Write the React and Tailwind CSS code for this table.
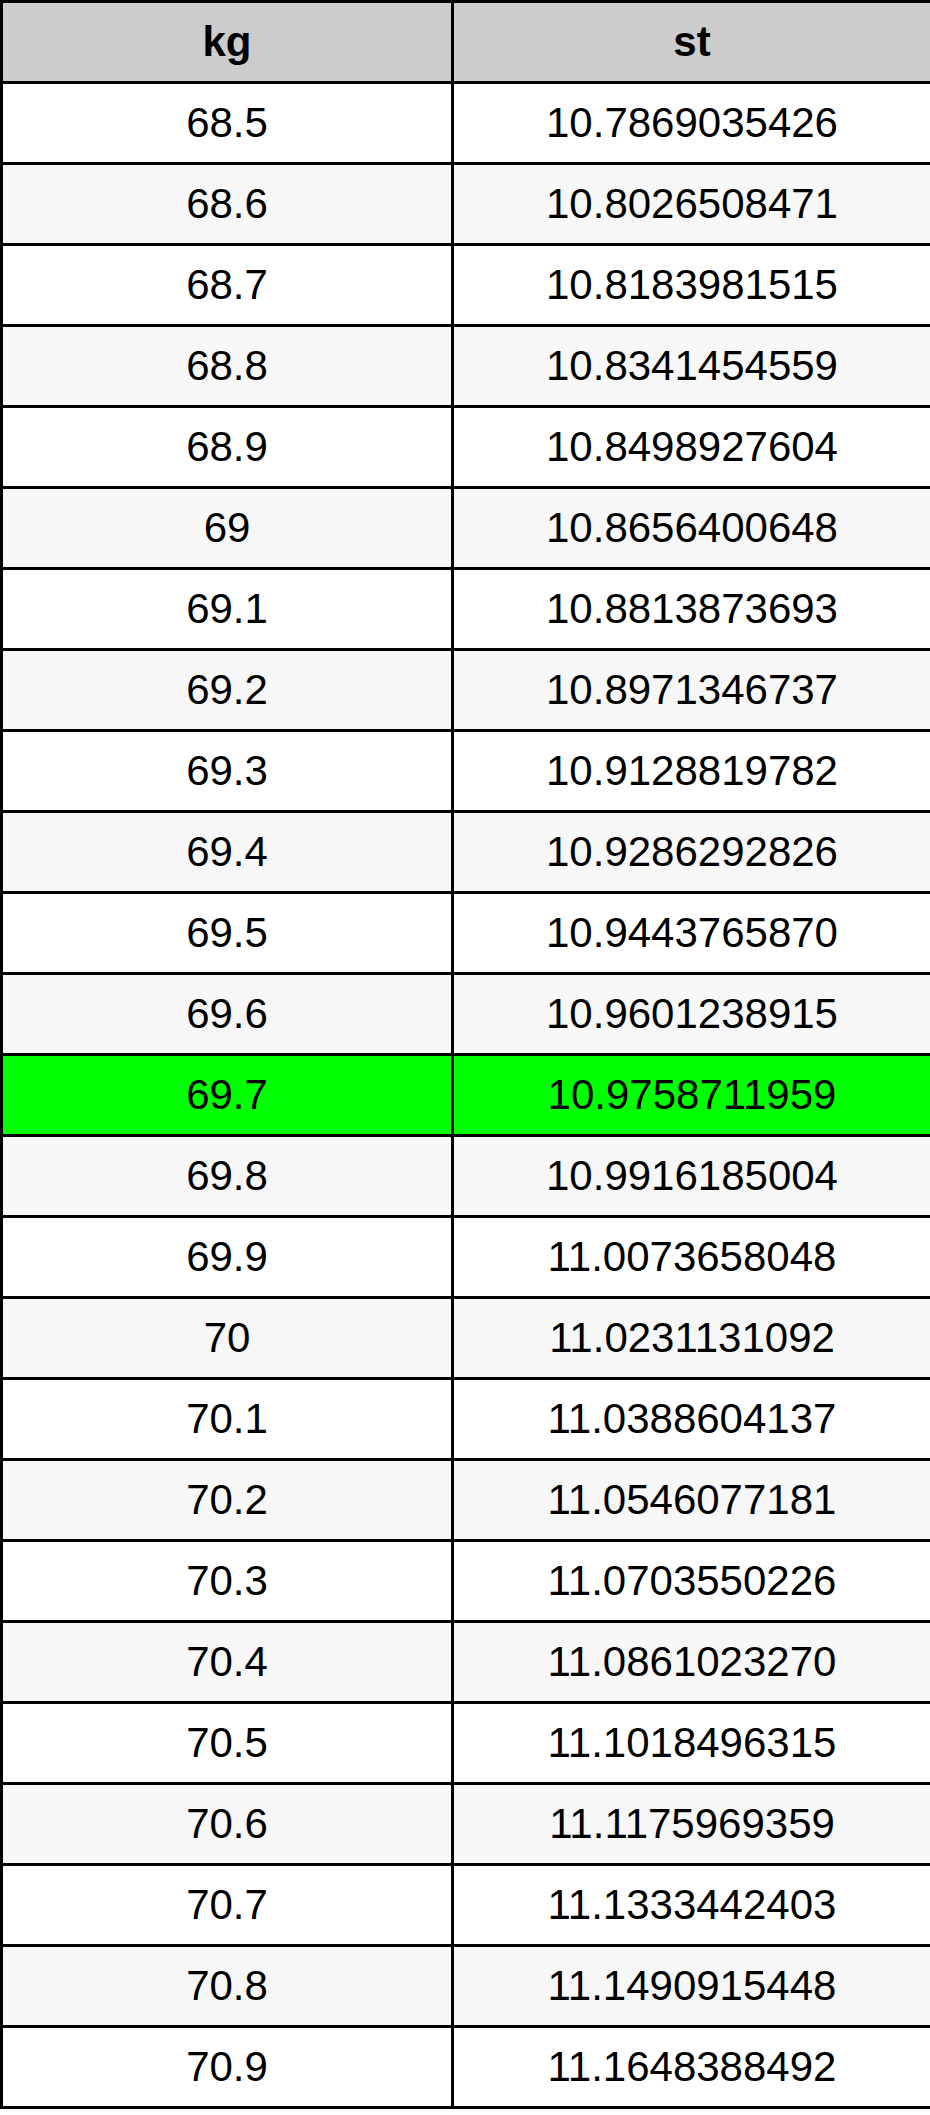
import React from "react";

const rows = [
  ["68.5", "10.7869035426"],
  ["68.6", "10.8026508471"],
  ["68.7", "10.8183981515"],
  ["68.8", "10.8341454559"],
  ["68.9", "10.8498927604"],
  ["69", "10.8656400648"],
  ["69.1", "10.8813873693"],
  ["69.2", "10.8971346737"],
  ["69.3", "10.9128819782"],
  ["69.4", "10.9286292826"],
  ["69.5", "10.9443765870"],
  ["69.6", "10.9601238915"],
  ["69.7", "10.9758711959"],
  ["69.8", "10.9916185004"],
  ["69.9", "11.0073658048"],
  ["70", "11.0231131092"],
  ["70.1", "11.0388604137"],
  ["70.2", "11.0546077181"],
  ["70.3", "11.0703550226"],
  ["70.4", "11.0861023270"],
  ["70.5", "11.1018496315"],
  ["70.6", "11.1175969359"],
  ["70.7", "11.1333442403"],
  ["70.8", "11.1490915448"],
  ["70.9", "11.1648388492"],
];

export default function App() {
  return (
    <div className="w-[930px] bg-white" style={{ fontFamily: '"Liberation Sans", Arial, sans-serif' }}>
      <div className="grid grid-cols-[451px_479px] border-l-[3px] border-t-[3px] border-black text-[42px] leading-none text-black">
        <div className="h-[81px] flex items-center justify-center bg-[#cccccc] border-r-[3px] border-b-[3px] border-black font-bold">kg</div>
        <div className="h-[81px] flex items-center justify-center bg-[#cccccc] border-r-[3px] border-b-[3px] border-black font-bold">st</div>
        {rows.map(([kg, st], i) => {
          const bg = kg === "69.7" ? "bg-[#00ff00]" : i % 2 === 1 ? "bg-[#f7f7f7]" : "bg-white";
          return (
            <React.Fragment key={kg}>
              <div className={`h-[81px] flex items-center justify-center border-r-[3px] border-b-[3px] border-black ${bg}`}>{kg}</div>
              <div className={`h-[81px] flex items-center justify-center border-r-[3px] border-b-[3px] border-black ${bg}`}>{st}</div>
            </React.Fragment>
          );
        })}
      </div>
    </div>
  );
}
